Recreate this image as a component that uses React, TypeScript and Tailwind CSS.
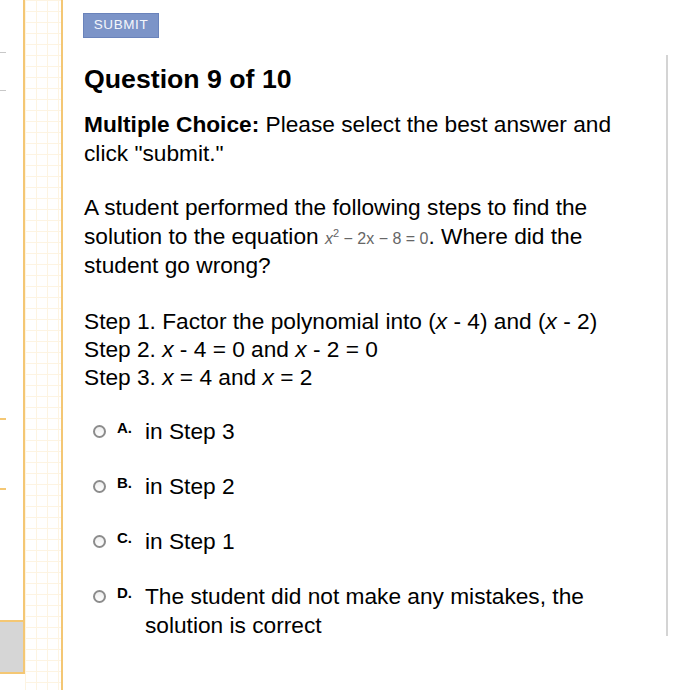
import React from 'react';

const options = [
    { letter: 'A.', text: ['in Step 3'] },
    { letter: 'B.', text: ['in Step 2'] },
    { letter: 'C.', text: ['in Step 1'] },
    { letter: 'D.', text: ['The student did not make any mistakes, the', 'solution is correct'] },
];

const Radio = () => (
    <span className="mt-[8px] block h-[13px] w-[13px] shrink-0 rounded-full border-2 border-[#8c8c8c] bg-gradient-to-b from-[#eeeeee] to-white" />
);

export default function App() {
    return (
        <div className="flex h-[690px] w-[700px] overflow-hidden bg-white font-['Liberation_Sans',Arial,sans-serif] text-black">
            {/* left rail */}
            <div className="flex w-[25px] shrink-0 flex-col">
                <div className="flex h-[620px] flex-col border-r-2 border-[#f4c774]">
                    <div className="mt-[52px] h-[1px] w-[6px] bg-[#c8c8c8]" />
                    <div className="mt-[37px] h-[1px] w-[6px] bg-[#c8c8c8]" />
                    <div className="mt-[327px] h-[2px] w-[6px] bg-[#f4c774]" />
                    <div className="mt-[68px] h-[2px] w-[6px] bg-[#f4c774]" />
                </div>
                <div className="h-[54px] border-t-2 border-r-2 border-b-2 border-[#f4c774] bg-[#d6d6d6]" />
            </div>
            <div className="w-[38px] shrink-0 border-r-2 border-[#f4c774] bg-[linear-gradient(to_right,#fdf4e2_1px,transparent_1px),linear-gradient(to_bottom,#fdf4e2_1px,transparent_1px)] bg-[size:11px_11px]" />

            {/* question */}
            <div className="flex w-[603px] shrink-0 flex-col pl-[20px] pt-[13px]">
                <button className="h-[25px] w-[76px] border border-[#6a83bb] bg-[#7c94c8] text-[13.5px] font-medium tracking-[0.6px] text-[#f4f6fb]">
                    SUBMIT
                </button>

                <div className="pl-[1px]">
                    <h1 className="mt-[26px] text-[26.7px] font-bold leading-[30px]">Question 9 of 10</h1>

                    <p className="mt-[16px] text-[22.7px] leading-[29px]">
                        <b>Multiple Choice:</b> Please select the best answer and
                        <br />
                        click "submit."
                    </p>

                    <p className="mt-[25px] text-[22.7px] leading-[29px]">
                        A student performed the following steps to find the
                        <br />
                        solution to the equation{' '}
                        <span className="whitespace-nowrap text-[16px] leading-none text-[#666]">
                            <i>x</i>
                            <span className="relative top-[-7px] text-[11px] leading-none">2</span>
                            <span> &minus; 2x &minus; 8 = 0</span>
                        </span>
                        . Where did the
                        <br />
                        student go wrong?
                    </p>

                    <div className="mt-[27px] text-[22.7px] leading-[28px]">
                        <div>Step 1. Factor the polynomial into (<i>x</i> - 4) and (<i>x</i> - 2)</div>
                        <div>Step 2. <i>x</i> - 4 = 0 and <i>x</i> - 2 = 0</div>
                        <div>Step 3. <i>x</i> = 4 and <i>x</i> = 2</div>
                    </div>

                    <div className="mt-[26px] flex flex-col gap-[26px] pl-[9px]">
                        {options.map((o) => (
                            <label key={o.letter} className="flex items-start">
                                <Radio />
                                <span className="ml-[11px] mt-[3px] w-[28px] shrink-0 text-[15px] font-bold leading-[16px]">
                                    {o.letter}
                                </span>
                                <span className="text-[22.7px] leading-[29px]">
                                    {o.text.map((t, i) => (
                                        <div key={i}>{t}</div>
                                    ))}
                                </span>
                            </label>
                        ))}
                    </div>
                </div>
            </div>
            <div className="mt-[55px] h-[581px] w-[2px] shrink-0 bg-[#d4d4d4]" />
        </div>
    );
}
